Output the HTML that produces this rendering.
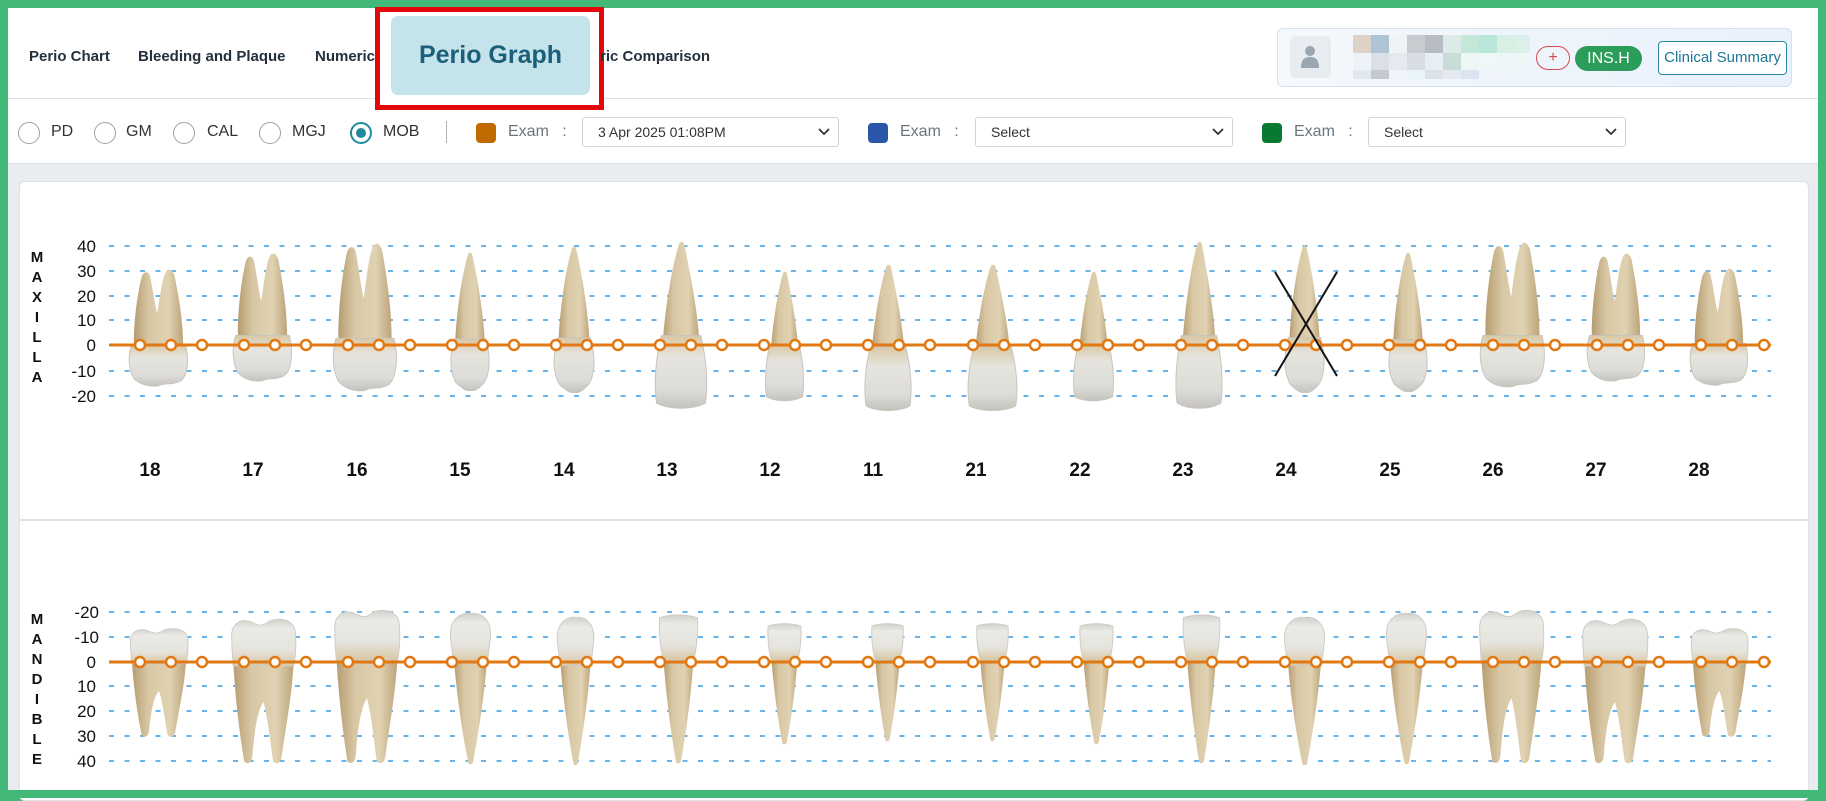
<!DOCTYPE html>
<html><head><meta charset="utf-8"><style>
*{margin:0;padding:0;box-sizing:border-box}
body{width:1826px;height:798px;overflow:hidden;background:#42b978;font-family:"Liberation Sans",sans-serif;position:relative}
.abs{position:absolute}
#main{position:absolute;left:8px;top:8px;width:1810px;height:782px;background:#e9edf0;overflow:hidden}
.nav{position:absolute;top:48px;font-size:15px;font-weight:bold;color:#24303e;white-space:nowrap}
.radio{position:absolute;top:122px;width:22px;height:22px;border:1.5px solid #9aa3ad;border-radius:50%;background:#fff}
.rl{position:absolute;top:123px;font-size:16px;color:#333;}
.sq{position:absolute;top:123px;width:20px;height:20px;border-radius:4px}
.ex{position:absolute;top:123px;font-size:16px;color:#6b7580}
.sel{position:absolute;top:117px;height:30px;border:1px solid #cfd4da;border-radius:3px;background:#fff;font-size:14px;color:#333;padding:6px 0 0 15px}
.sel svg{position:absolute;right:8px;top:10px}
</style></head><body>
<div id="main"></div>
<div class="abs" style="left:8px;top:8px;width:1810px;height:90px;background:#fff"></div>
<div class="abs" style="left:8px;top:98px;width:1810px;height:1px;background:#dde2e8"></div>
<div class="abs" style="left:8px;top:99px;width:1810px;height:65px;background:#fff"></div>
<div class="abs" style="left:8px;top:163px;width:1810px;height:1px;background:#dde2e8"></div>

<div class="nav" style="left:29px">Perio Chart</div>
<div class="nav" style="left:138px">Bleeding and Plaque</div>
<div class="nav" style="left:315px">Numerical Comparison</div>
<div class="abs" style="left:375px;top:7px;width:229px;height:103px;border:5px solid #e4080a;background:#fff"></div>
<div class="abs" style="left:391px;top:16px;width:199px;height:79px;background:#c5e3ea;border-radius:7px;font-size:25px;font-weight:bold;color:#1b5f7b;text-align:center;line-height:79px">Perio Graph</div>
<div class="nav" style="left:600px">ric Comparison</div>

<div class="abs" style="left:1277px;top:28px;width:515px;height:59px;border:1px solid #d4e1f0;border-radius:6px;background:linear-gradient(90deg,#f5f8fc,#e8f1fc)"></div>
<div class="abs" style="left:1290px;top:36px;width:41px;height:42px;background:#e8ebef;border-radius:5px"></div>
<svg class="abs" style="left:1300px;top:45px" width="20" height="24"><circle cx="10" cy="6" r="5" fill="#9aa6b2"/><path d="M1 23 C1 14 5 12 10 12 C15 12 19 14 19 23Z" fill="#9aa6b2"/></svg>
<svg class="abs" style="left:1353px;top:35px" width="180" height="45">
<rect x="0" y="0" width="18" height="18" fill="#dcd2c8"/><rect x="18" y="0" width="18" height="18" fill="#b0c4d8"/><rect x="36" y="0" width="18" height="18" fill="#f0f3f5"/><rect x="54" y="0" width="18" height="18" fill="#c8ccd0"/><rect x="72" y="0" width="18" height="18" fill="#b8bcc4"/><rect x="90" y="0" width="18" height="18" fill="#dcebe8"/><rect x="108" y="0" width="18" height="18" fill="#c4e8d8"/><rect x="126" y="0" width="18" height="18" fill="#b8e6d8"/><rect x="144" y="0" width="18" height="18" fill="#d8f0e4"/><rect x="162" y="0" width="15" height="18" fill="#dcefea"/>
<rect x="0" y="18" width="18" height="17" fill="#eef3f8"/><rect x="18" y="18" width="18" height="17" fill="#dbe0e8"/><rect x="36" y="18" width="18" height="17" fill="#e4eaf0"/><rect x="54" y="18" width="18" height="17" fill="#d8dde4"/><rect x="72" y="18" width="18" height="17" fill="#e8eef6"/><rect x="90" y="18" width="18" height="17" fill="#c8dcd8"/><rect x="108" y="18" width="18" height="17" fill="#eef6f6"/><rect x="126" y="18" width="18" height="17" fill="#eef8f8"/><rect x="144" y="18" width="33" height="17" fill="#eef6f8"/>
<rect x="0" y="35" width="18" height="9" fill="#e2e8f0"/><rect x="18" y="35" width="18" height="9" fill="#c4c8d0"/><rect x="36" y="35" width="18" height="9" fill="#eef4fa"/><rect x="54" y="35" width="18" height="9" fill="#e8f4fa"/><rect x="72" y="35" width="18" height="9" fill="#dde2ea"/><rect x="90" y="35" width="18" height="9" fill="#e4eaf0"/><rect x="108" y="35" width="18" height="9" fill="#dce4f0"/>
</svg>
<div class="abs" style="left:1536px;top:46px;width:34px;height:24px;border:1.5px solid #d9484c;border-radius:12px;color:#d9484c;font-size:16px;text-align:center;line-height:21px">+</div>
<div class="abs" style="left:1575px;top:46px;width:67px;height:25px;background:#2c9c5a;border-radius:13px;color:#fff;font-size:16px;text-align:center;line-height:25px">INS.H</div>
<div class="abs" style="left:1658px;top:41px;width:129px;height:34px;border:1px solid #2a8aa6;border-radius:4px;background:#fff;color:#1f7596;font-size:15px;text-align:center;line-height:32px">Clinical Summary</div>

<div class="radio" style="left:18px"></div><div class="rl" style="left:51px">PD</div>
<div class="radio" style="left:94px"></div><div class="rl" style="left:126px">GM</div>
<div class="radio" style="left:173px"></div><div class="rl" style="left:207px">CAL</div>
<div class="radio" style="left:259px"></div><div class="rl" style="left:292px">MGJ</div>
<div class="radio" style="left:350px;border:2px solid #1f8a9c"><div style="position:absolute;left:4px;top:4px;width:10px;height:10px;border-radius:50%;background:#1f8a9c"></div></div><div class="rl" style="left:383px">MOB</div>
<div class="abs" style="left:446px;top:121px;width:1px;height:22px;background:#aab1b8"></div>
<div class="sq" style="left:476px;background:#c06a00"></div><div class="ex" style="left:508px">Exam&nbsp;&nbsp;&nbsp;:</div>
<div class="sel" style="left:582px;width:257px">3 Apr 2025 01:08PM<svg width="12" height="8"><path d="M1 1L6 6L11 1" stroke="#333" stroke-width="1.8" fill="none"/></svg></div>
<div class="sq" style="left:868px;background:#2b56a8"></div><div class="ex" style="left:900px">Exam&nbsp;&nbsp;&nbsp;:</div>
<div class="sel" style="left:975px;width:258px">Select<svg width="12" height="8"><path d="M1 1L6 6L11 1" stroke="#333" stroke-width="1.8" fill="none"/></svg></div>
<div class="sq" style="left:1262px;background:#067a33"></div><div class="ex" style="left:1294px">Exam&nbsp;&nbsp;&nbsp;:</div>
<div class="sel" style="left:1368px;width:258px">Select<svg width="12" height="8"><path d="M1 1L6 6L11 1" stroke="#333" stroke-width="1.8" fill="none"/></svg></div>

<div class="abs" style="left:19px;top:181px;width:1790px;height:620px;background:#fff;border:1px solid #dfe3e8;border-radius:6px"></div>
<div class="abs" style="left:20px;top:519px;width:1788px;height:2px;background:#dde2ea"></div>

<svg class="abs" style="left:0;top:0" width="1826" height="798">
<defs>
<linearGradient id="rg" x1="0" y1="0" x2="1" y2="0"><stop offset="0" stop-color="#b59c70"/><stop offset=".3" stop-color="#d8c7a4"/><stop offset=".7" stop-color="#e0d2b2"/><stop offset="1" stop-color="#bca47a"/></linearGradient>
<linearGradient id="cu" x1="0" y1="0" x2="0" y2="1"><stop offset="0" stop-color="#d8c8a4"/><stop offset=".3" stop-color="#e6e4de"/><stop offset=".75" stop-color="#dddcd8"/><stop offset="1" stop-color="#c4c2bd"/></linearGradient>
<linearGradient id="cl" x1="0" y1="1" x2="0" y2="0"><stop offset="0" stop-color="#d8c8a4"/><stop offset=".35" stop-color="#e6e4de"/><stop offset=".8" stop-color="#ebeae6"/><stop offset="1" stop-color="#d2d0cb"/></linearGradient>
<symbol id="mu" viewBox="0 0 100 200" preserveAspectRatio="none">
<path d="M10 140 C8 100 14 50 22 15 C25 3 33 3 36 12 C40 30 44 60 48 75 C52 50 55 20 62 5 C66 -2 72 0 76 10 C84 50 92 100 90 140Z" fill="url(#rg)"/>
<path d="M6 128 L94 128 C100 150 99 180 86 190 C70 198 60 192 50 198 C35 200 20 196 10 186 C0 170 0 145 6 128Z" fill="url(#cu)" stroke="#c8c5be" stroke-width="1" vector-effect="non-scaling-stroke"/></symbol>
<symbol id="pu" viewBox="0 0 100 200" preserveAspectRatio="none">
<path d="M16 135 C18 90 32 30 46 3 C49 0 53 0 55 4 C68 40 82 95 84 135Z" fill="url(#rg)"/>
<path d="M14 125 L86 125 C97 150 96 175 82 188 C66 200 55 200 50 200 C40 200 30 195 18 188 C3 170 4 150 14 125Z" fill="url(#cu)" stroke="#c8c5be" stroke-width="1" vector-effect="non-scaling-stroke"/></symbol>
<symbol id="au" viewBox="0 0 100 200" preserveAspectRatio="none">
<path d="M18 125 C22 80 36 25 47 3 C50 0 54 0 56 5 C66 40 80 85 82 125Z" fill="url(#rg)"/>
<path d="M16 112 L84 112 C94 140 97 170 92 192 C70 200 30 200 8 192 C3 170 6 140 16 112Z" fill="url(#cu)" stroke="#c8c5be" stroke-width="1" vector-effect="non-scaling-stroke"/></symbol>
<symbol id="ml" viewBox="0 0 100 200" preserveAspectRatio="none">
<path d="M6 55 C8 100 14 150 22 195 C27 200 33 197 34 188 C37 150 42 125 50 115 C56 135 60 170 64 195 C68 200 74 198 76 190 C84 140 92 100 94 55Z" fill="url(#rg)"/>
<path d="M4 30 C2 10 15 2 30 6 C40 10 45 14 55 8 C65 0 94 0 96 20 C98 40 96 55 94 66 L6 66 C5 50 4 40 4 30Z" fill="url(#cl)" stroke="#cfccc6" stroke-width="1" vector-effect="non-scaling-stroke"/></symbol>
<symbol id="pl" viewBox="0 0 100 200" preserveAspectRatio="none">
<path d="M14 55 C20 110 36 170 46 198 C50 200 55 199 56 195 C66 160 80 110 86 55Z" fill="url(#rg)"/>
<path d="M8 35 C3 10 30 0 50 2 C72 0 97 10 92 35 C90 45 88 55 86 66 L14 66 C12 55 10 45 8 35Z" fill="url(#cl)" stroke="#cfccc6" stroke-width="1" vector-effect="non-scaling-stroke"/></symbol>
<symbol id="al" viewBox="0 0 100 200" preserveAspectRatio="none">
<path d="M16 55 C22 110 36 170 45 198 C50 200 54 199 56 195 C66 160 78 110 84 55Z" fill="url(#rg)"/>
<path d="M8 5 C30 0 70 0 92 5 C94 25 90 45 84 62 L16 62 C10 45 6 25 8 5Z" fill="url(#cl)" stroke="#cfccc6" stroke-width="1" vector-effect="non-scaling-stroke"/></symbol>
</defs>
<g stroke="#3a9be0" stroke-width="1.5" stroke-dasharray="5 10.5">
<line x1="109" y1="246" x2="1771" y2="246"/><line x1="109" y1="271" x2="1771" y2="271"/><line x1="109" y1="296" x2="1771" y2="296"/><line x1="109" y1="320" x2="1771" y2="320"/><line x1="109" y1="371" x2="1771" y2="371"/><line x1="109" y1="396" x2="1771" y2="396"/>
<line x1="109" y1="612" x2="1771" y2="612"/><line x1="109" y1="637" x2="1771" y2="637"/><line x1="109" y1="686" x2="1771" y2="686"/><line x1="109" y1="711" x2="1771" y2="711"/><line x1="109" y1="736" x2="1771" y2="736"/><line x1="109" y1="761" x2="1771" y2="761"/>
</g>
<use href="#mu" x="128" y="269" width="61" height="118"/>
<use href="#mu" x="232" y="253" width="61" height="129"/>
<use href="#mu" x="332" y="243" width="66" height="149"/>
<use href="#pu" x="448" y="252" width="44" height="139"/>
<use href="#pu" x="551" y="246" width="46" height="147"/>
<use href="#au" x="652" y="241" width="58" height="169"/>
<use href="#au" x="763" y="271" width="43" height="131"/>
<use href="#au" x="862" y="264" width="52" height="148"/>
<use href="#au" x="965" y="264" width="55" height="148"/>
<use href="#au" x="1071" y="271" width="45" height="131"/>
<use href="#au" x="1173" y="241" width="52" height="169"/>
<use href="#pu" x="1282" y="245" width="45" height="148"/>
<use href="#pu" x="1386" y="252" width="44" height="140"/>
<use href="#mu" x="1479" y="242" width="67" height="146"/>
<use href="#mu" x="1586" y="253" width="60" height="129"/>
<use href="#mu" x="1689" y="268" width="60" height="118"/>

<use href="#ml" x="128" y="627" width="62" height="111"/>
<use href="#ml" x="229" y="617" width="69" height="148"/>
<use href="#ml" x="332" y="608" width="70" height="157"/>
<use href="#pl" x="447" y="612" width="47" height="153"/>
<use href="#pl" x="554" y="616" width="43" height="150"/>
<use href="#al" x="656" y="614" width="45" height="150"/>
<use href="#al" x="765" y="623" width="39" height="122"/>
<use href="#al" x="869" y="623" width="37" height="119"/>
<use href="#al" x="974" y="623" width="37" height="119"/>
<use href="#al" x="1077" y="623" width="39" height="122"/>
<use href="#al" x="1180" y="614" width="43" height="150"/>
<use href="#pl" x="1281" y="616" width="47" height="150"/>
<use href="#pl" x="1383" y="612" width="47" height="153"/>
<use href="#ml" x="1477" y="608" width="69" height="157"/>
<use href="#ml" x="1580" y="617" width="70" height="148"/>
<use href="#ml" x="1689" y="627" width="61" height="111"/>

<line x1="109" y1="345" x2="1771" y2="345" stroke="#e27811" stroke-width="3"/>
<line x1="109" y1="662" x2="1771" y2="662" stroke="#e27811" stroke-width="3"/>
<g fill="#fff" stroke="#e27811" stroke-width="2.5">
<circle cx="140" cy="345" r="5"/><circle cx="171" cy="345" r="5"/><circle cx="202" cy="345" r="5"/>
<circle cx="244" cy="345" r="5"/><circle cx="275" cy="345" r="5"/><circle cx="306" cy="345" r="5"/>
<circle cx="348" cy="345" r="5"/><circle cx="379" cy="345" r="5"/><circle cx="410" cy="345" r="5"/>
<circle cx="452" cy="345" r="5"/><circle cx="483" cy="345" r="5"/><circle cx="514" cy="345" r="5"/>
<circle cx="556" cy="345" r="5"/><circle cx="587" cy="345" r="5"/><circle cx="618" cy="345" r="5"/>
<circle cx="660" cy="345" r="5"/><circle cx="691" cy="345" r="5"/><circle cx="722" cy="345" r="5"/>
<circle cx="764" cy="345" r="5"/><circle cx="795" cy="345" r="5"/><circle cx="826" cy="345" r="5"/>
<circle cx="868" cy="345" r="5"/><circle cx="899" cy="345" r="5"/><circle cx="930" cy="345" r="5"/>
<circle cx="973" cy="345" r="5"/><circle cx="1004" cy="345" r="5"/><circle cx="1035" cy="345" r="5"/>
<circle cx="1077" cy="345" r="5"/><circle cx="1108" cy="345" r="5"/><circle cx="1139" cy="345" r="5"/>
<circle cx="1181" cy="345" r="5"/><circle cx="1212" cy="345" r="5"/><circle cx="1243" cy="345" r="5"/>
<circle cx="1285" cy="345" r="5"/><circle cx="1316" cy="345" r="5"/><circle cx="1347" cy="345" r="5"/>
<circle cx="1389" cy="345" r="5"/><circle cx="1420" cy="345" r="5"/><circle cx="1451" cy="345" r="5"/>
<circle cx="1493" cy="345" r="5"/><circle cx="1524" cy="345" r="5"/><circle cx="1555" cy="345" r="5"/>
<circle cx="1597" cy="345" r="5"/><circle cx="1628" cy="345" r="5"/><circle cx="1659" cy="345" r="5"/>
<circle cx="1701" cy="345" r="5"/><circle cx="1732" cy="345" r="5"/><circle cx="1764" cy="345" r="5"/>

<circle cx="140" cy="662" r="5"/><circle cx="171" cy="662" r="5"/><circle cx="202" cy="662" r="5"/>
<circle cx="244" cy="662" r="5"/><circle cx="275" cy="662" r="5"/><circle cx="306" cy="662" r="5"/>
<circle cx="348" cy="662" r="5"/><circle cx="379" cy="662" r="5"/><circle cx="410" cy="662" r="5"/>
<circle cx="452" cy="662" r="5"/><circle cx="483" cy="662" r="5"/><circle cx="514" cy="662" r="5"/>
<circle cx="556" cy="662" r="5"/><circle cx="587" cy="662" r="5"/><circle cx="618" cy="662" r="5"/>
<circle cx="660" cy="662" r="5"/><circle cx="691" cy="662" r="5"/><circle cx="722" cy="662" r="5"/>
<circle cx="764" cy="662" r="5"/><circle cx="795" cy="662" r="5"/><circle cx="826" cy="662" r="5"/>
<circle cx="868" cy="662" r="5"/><circle cx="899" cy="662" r="5"/><circle cx="930" cy="662" r="5"/>
<circle cx="973" cy="662" r="5"/><circle cx="1004" cy="662" r="5"/><circle cx="1035" cy="662" r="5"/>
<circle cx="1077" cy="662" r="5"/><circle cx="1108" cy="662" r="5"/><circle cx="1139" cy="662" r="5"/>
<circle cx="1181" cy="662" r="5"/><circle cx="1212" cy="662" r="5"/><circle cx="1243" cy="662" r="5"/>
<circle cx="1285" cy="662" r="5"/><circle cx="1316" cy="662" r="5"/><circle cx="1347" cy="662" r="5"/>
<circle cx="1389" cy="662" r="5"/><circle cx="1420" cy="662" r="5"/><circle cx="1451" cy="662" r="5"/>
<circle cx="1493" cy="662" r="5"/><circle cx="1524" cy="662" r="5"/><circle cx="1555" cy="662" r="5"/>
<circle cx="1597" cy="662" r="5"/><circle cx="1628" cy="662" r="5"/><circle cx="1659" cy="662" r="5"/>
<circle cx="1701" cy="662" r="5"/><circle cx="1732" cy="662" r="5"/><circle cx="1764" cy="662" r="5"/>
</g>
<g stroke="#111" stroke-width="2"><line x1="1275" y1="272" x2="1337" y2="376"/><line x1="1337" y1="272" x2="1275" y2="376"/></g>

<g font-family="Liberation Sans, sans-serif" font-size="17" fill="#111" text-anchor="end">
<text x="96" y="252">40</text><text x="96" y="277">30</text><text x="96" y="302">20</text><text x="96" y="326">10</text><text x="96" y="351">0</text><text x="96" y="377">-10</text><text x="96" y="402">-20</text>
<text x="99" y="618">-20</text><text x="99" y="643">-10</text><text x="96" y="668">0</text><text x="96" y="692">10</text><text x="96" y="717">20</text><text x="96" y="742">30</text><text x="96" y="767">40</text>
</g>
<g font-family="Liberation Sans, sans-serif" font-size="15" font-weight="bold" fill="#111" text-anchor="middle">
<text x="37" y="262">M</text><text x="37" y="282">A</text><text x="37" y="302">X</text><text x="37" y="322">I</text><text x="37" y="342">L</text><text x="37" y="362">L</text><text x="37" y="382">A</text>
<text x="37" y="624">M</text><text x="37" y="644">A</text><text x="37" y="664">N</text><text x="37" y="684">D</text><text x="37" y="704">I</text><text x="37" y="724">B</text><text x="37" y="744">L</text><text x="37" y="764">E</text>
</g>
<g font-family="Liberation Sans, sans-serif" font-size="19" font-weight="bold" fill="#111" text-anchor="middle">
<text x="150" y="476">18</text><text x="253" y="476">17</text><text x="357" y="476">16</text><text x="460" y="476">15</text><text x="564" y="476">14</text><text x="667" y="476">13</text><text x="770" y="476">12</text><text x="873" y="476">11</text><text x="976" y="476">21</text><text x="1080" y="476">22</text><text x="1183" y="476">23</text><text x="1286" y="476">24</text><text x="1390" y="476">25</text><text x="1493" y="476">26</text><text x="1596" y="476">27</text><text x="1699" y="476">28</text>
</g>
</svg>
<div class="abs" style="left:0;top:790px;width:1826px;height:8px;background:#42b978"></div>
</body></html>
